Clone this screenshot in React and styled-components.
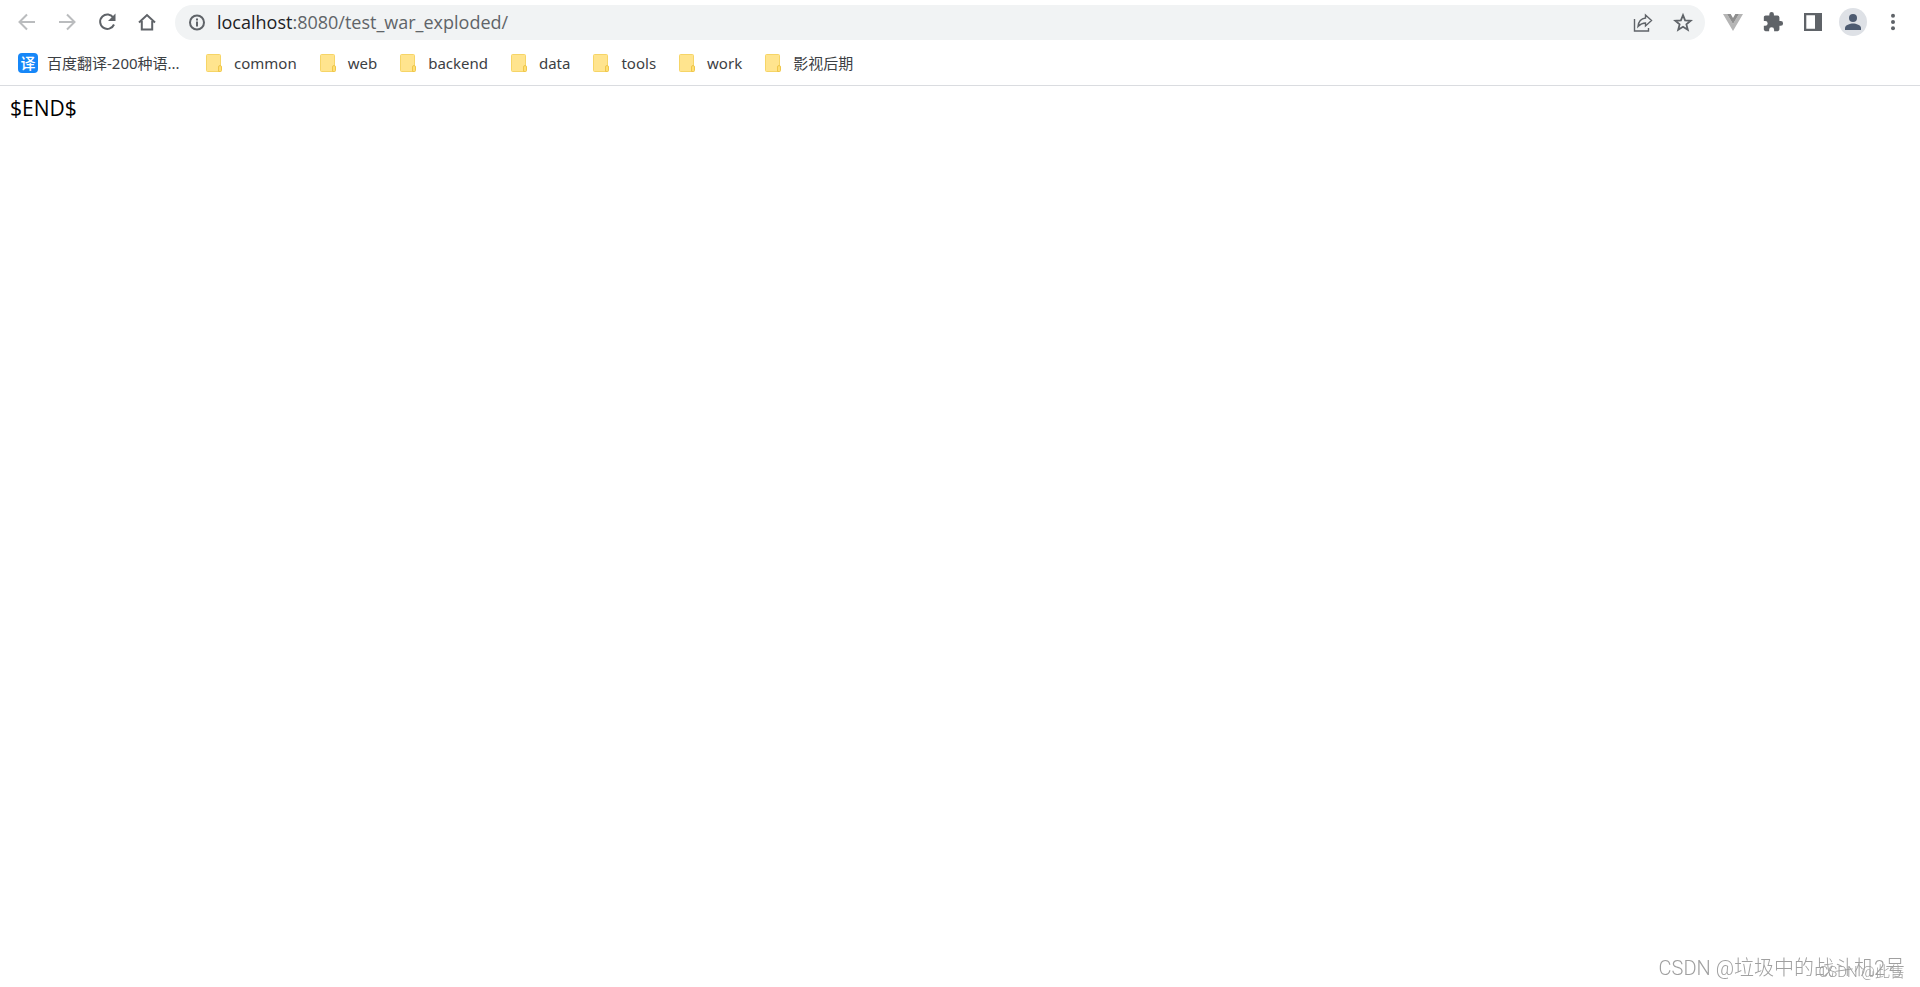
import styled, { createGlobalStyle } from "styled-components";

const GlobalStyle = createGlobalStyle`
    * {
        box-sizing: border-box;
    }

    body {
        margin: 0;
        background: #FFF;
        font-family: "Open Sans", "Noto Sans CJK SC", sans-serif;
    }
`

const Window = styled.div`
    display: flex;
    flex-direction: column;
    min-height: 100vh;
`

const Toolbar = styled.header`
    display: flex;
    align-items: flex-end;
    height: 44px;
    padding: 0 7px 4px;
`

const IconButton = styled.button`
    display: flex;
    align-items: center;
    justify-content: center;
    flex: none;
    width: 40px;
    height: 36px;
    padding: 0;
    border: none;
    background: none;
    color: ${(props) => (props.disabled ? "#BABCBE" : "#5F6368")};
`

const Omnibox = styled.div`
    display: flex;
    align-items: flex-end;
    flex: 1;
    height: 35px;
    margin: 0 8px;
    padding: 0 2px;
    border-radius: 18px;
    background: #F1F3F4;
`

const Address = styled.div`
    flex: 1;
    margin-bottom: 6px;
    color: #606468;
    font-size: 18px;
    line-height: 24px;
`

const Host = styled.span`
    color: #202124;
`

const Avatar = styled.span`
    display: flex;
    align-items: center;
    justify-content: center;
    width: 28px;
    height: 28px;
    border-radius: 50%;
    background: #DEE1E6;
`

const Bookmarks = styled.nav`
    display: flex;
    align-items: center;
    gap: 23px;
    height: 42px;
    padding: 0 18px 3px;
    border-bottom: 1px solid #DADCE0;
`

const Bookmark = styled.a`
    display: flex;
    align-items: center;
    gap: ${(props) => props.$gap || 12}px;
    color: #3C4043;
    font-family: "Noto Sans", "Noto Sans CJK SC", sans-serif;
    font-size: 15px;
    line-height: 20px;
    text-decoration: none;
    white-space: nowrap;
`

const SiteTitle = styled.span`
    min-width: 136px;
`

const Translate = styled.span`
    display: flex;
    align-items: center;
    justify-content: center;
    width: 20px;
    height: 20px;
    border-radius: 4px;
    background: #1687F8;
    color: #FFF;
    font-size: 15px;
    font-weight: 500;
`

const Page = styled.main`
    flex: 1;
    padding: 9px 10px;
    color: #000;
    font-size: 21px;
    line-height: 27px;
`

const Watermark = styled.div`
    position: fixed;
    right: 15px;
    bottom: 5px;
    color: #A0A0A0;
    font-family: Roboto, "Noto Sans CJK SC", sans-serif;
    font-size: 20px;
    font-weight: 300;
    line-height: 28px;
`

const SmallMark = styled(Watermark)`
    font-size: 15px;
    line-height: 20px;
`

const Icon = ({ size = 20, children }) => (
    <svg width={size} height={size} viewBox="0 0 20 20" fill="none" stroke="currentColor" strokeWidth="2" aria-hidden="true">
        {children}
    </svg>
)

const FolderIcon = () => (
    <svg width="16" height="18" viewBox="0 0 16 18" aria-hidden="true">
        <rect x="0.5" y="0.5" width="14" height="17" rx="1" fill="#FFE48E" stroke="#F6D567" />
        <path d="M12.5 17.5V13q0-1.500 1.500-1.500T15.500 13v3.500q0 1-1 1z" fill="#FFDF73" stroke="#EFC64B" />
    </svg>
)

const folders = ["common", "web", "backend", "data", "tools", "work", "影视后期"]

const App = () => {
    return (
        <Window>
            <GlobalStyle />
            <Toolbar>
                <IconButton aria-label="Back" disabled>
                    <Icon><path d="M18 10H3M10 2.500L2.500 10l7.500 7.500" /></Icon>
                </IconButton>
                <IconButton aria-label="Forward" disabled>
                    <Icon><path d="M2 10h15M10 2.500l7.500 7.500-7.500 7.500" /></Icon>
                </IconButton>
                <IconButton aria-label="Reload">
                    <Icon>
                        <path d="M16.500 6A7.200 7.200 0 1 0 17 12.500" />
                        <path d="M18.500 1.500v7.500H11z" fill="currentColor" stroke="none" />
                    </Icon>
                </IconButton>
                <IconButton aria-label="Home">
                    <Icon><path d="M2 10.500L10 3l8 7.500M4.800 9v8.500h10.400V9" /></Icon>
                </IconButton>
                <Omnibox>
                    <IconButton aria-label="Site information">
                        <Icon>
                            <circle cx="10" cy="10.500" r="7" />
                            <path d="M10 9.500v5M10 6.500v2" />
                        </Icon>
                    </IconButton>
                    <Address><Host>localhost</Host>:8080/test_war_exploded/</Address>
                    <IconButton aria-label="Share">
                        <Icon>
                            <path d="M1.500 7v12H15.500V16" strokeWidth="1.400" />
                            <path d="M12.500 3L18.500 8.500l-6 5.500V11C9.500 11 7.500 12 5 14.500c.5-5 3-8 7.500-8.500z" strokeWidth="1.400" />
                        </Icon>
                    </IconButton>
                    <IconButton aria-label="Bookmark this page">
                        <Icon><path d="M10 3.200l2.100 5.200 5.600.4-4.300 3.600 1.400 5.400-4.800-3-4.800 3 1.400-5.400-4.300-3.600 5.600-.4z" strokeWidth="1.800" /></Icon>
                    </IconButton>
                </Omnibox>
                <IconButton aria-label="Vue devtools">
                    <Icon>
                        <path d="M0 2h4l6 10 6-10h4L10 19z" fill="#B5B5B5" stroke="none" />
                        <path d="M4 2h3.700L10 6l2.300-4H16l-6 10z" fill="#8E8E8E" stroke="none" />
                    </Icon>
                </IconButton>
                <IconButton aria-label="Extensions">
                    <svg width="22" height="22" viewBox="0 0 24 24" fill="currentColor" aria-hidden="true">
                        <path d="M20.500 11H19V7c0-1.100-.9-2-2-2h-4V3.500a2.500 2.500 0 0 0-5 0V5H4c-1.100 0-2 .9-2 2v3.800h1.500a2.700 2.700 0 0 1 0 5.400H2V20c0 1.100.9 2 2 2h3.800v-1.500a2.700 2.700 0 0 1 5.400 0V22H17c1.100 0 2-.9 2-2v-4h1.500a2.500 2.500 0 0 0 0-5z" />
                    </svg>
                </IconButton>
                <IconButton aria-label="Side panel">
                    <Icon>
                        <path fillRule="evenodd" d="M1 1h18v18H1zM3.300 3.300v13.400H12V3.300z" fill="currentColor" stroke="none" />
                    </Icon>
                </IconButton>
                <IconButton aria-label="Profile">
                    <Avatar>
                        <svg width="16" height="16" viewBox="0 0 16 16" fill="#4D5B71" aria-hidden="true">
                            <circle cx="8" cy="4" r="4" />
                            <path d="M0 16v-2c0-3 5-4.500 8-4.500s8 1.500 8 4.500v2z" />
                        </svg>
                    </Avatar>
                </IconButton>
                <IconButton aria-label="Menu">
                    <Icon>
                        <g fill="currentColor" stroke="none">
                            <circle cx="10" cy="3.700" r="2" />
                            <circle cx="10" cy="10" r="2" />
                            <circle cx="10" cy="16.300" r="2" />
                        </g>
                    </Icon>
                </IconButton>
            </Toolbar>
            <Bookmarks aria-label="Bookmarks">
                <Bookmark href="#" $gap={9}>
                    <Translate aria-hidden="true">译</Translate>
                    <SiteTitle>百度翻译-200种语...</SiteTitle>
                </Bookmark>
                {folders.map((folder) => (
                    <Bookmark key={folder} href="#">
                        <FolderIcon />
                        {folder}
                    </Bookmark>
                ))}
            </Bookmarks>
            <Page>$END$</Page>
            <SmallMark>CSDN @此售</SmallMark>
            <Watermark>CSDN @垃圾中的战斗机2号</Watermark>
        </Window>
    );
}

export default App;
